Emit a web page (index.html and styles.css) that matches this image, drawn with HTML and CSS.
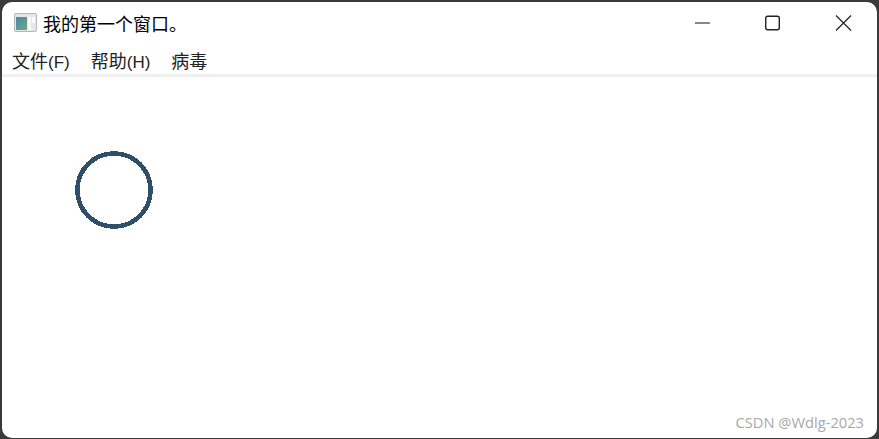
FILE: index.html
```html
<!DOCTYPE html>
<html lang="zh">
<head>
<meta charset="utf-8">
<title>我的第一个窗口。</title>
<link rel="stylesheet" href="styles.css">
</head>
<body>
<div class="window">
  <header class="titlebar">
    <svg class="app-icon" width="24" height="20" viewBox="0 0 24 20">
      <defs><linearGradient id="g" x1="0" y1="0" x2="1" y2="1"><stop offset="0" stop-color="#4a86a8"/><stop offset="1" stop-color="#6fa97f"/></linearGradient></defs>
      <rect x="0.5" y="0.5" width="22" height="18" rx="1.5" fill="#e6e6e6" stroke="#b4b8bc"/>
      <rect x="2" y="4" width="11" height="13" fill="url(#g)"/>
      <rect x="14" y="4" width="3" height="13" fill="#fbfbfb"/>
      <rect x="18" y="4" width="3" height="6" fill="#fbfbfb"/>
    </svg>
    <span class="title">我的第一个窗口。</span>
    <div class="controls">
      <svg class="ctl" width="70" height="16" viewBox="0 0 70 16"><path d="M20 8H35" stroke="#111" stroke-width="1.2"/></svg>
      <svg class="ctl" width="70" height="16" viewBox="0 0 70 16"><rect x="20.7" y="1.2" width="13.6" height="13.6" rx="2" fill="none" stroke="#222" stroke-width="1.4"/></svg>
      <svg class="ctl" width="56" height="16" viewBox="0 0 56 16"><path d="M21 .5L36 15.5M36 .5L21 15.5" stroke="#222" stroke-width="1.2"/></svg>
    </div>
  </header>
  <nav class="menubar">
    <span>文件<span class="mn">(F)</span></span>
    <span>帮助<span class="mn">(H)</span></span>
    <span>病毒</span>
  </nav>
  <main class="client">
    <svg class="circle" width="78" height="78" viewBox="0 0 78 78"><circle cx="39" cy="39" r="36.6" fill="none" stroke="#2f4f68" stroke-width="4.6" shape-rendering="crispEdges"/></svg>
    <div class="watermark">CSDN @Wdlg-2023</div>
  </main>
</div>
</body>
</html>
```
FILE: styles.css
```css
html, body {
  margin: 0;
  padding: 0;
  width: 879px;
  height: 439px;
  overflow: hidden;
  background: #3a3a3a;
}
.window {
  box-sizing: border-box;
  width: 875px;
  height: 436px;
  margin: 2px 0 0 2px;
  background: #fff;
  border-radius: 10px;
  display: flex;
  flex-direction: column;
  overflow: hidden;
  font-family: "Noto Sans CJK SC", "Liberation Sans", sans-serif;
  color: #111;
}
.titlebar {
  height: 42px;
  display: flex;
  align-items: center;
  padding-left: 12px;
  flex: none;
}
.app-icon {
  flex: none;
  margin-right: 5px;
}
.title {
  font-size: 18px;
  line-height: 40px;
  color: #000;
}
.controls {
  margin-left: auto;
  margin-right: 6px;
  display: flex;
}
.menubar {
  height: 33px;
  box-sizing: border-box;
  padding-top: 2px;
  border-bottom: 3px solid #f0f0f0;
  display: flex;
  gap: 21px;
  padding-left: 10px;
  align-items: center;
  font-size: 18px;
  color: #222;
  flex: none;
}
.mn {
  font-family: "Liberation Sans", sans-serif;
  font-size: 17px;
}
.client {
  flex: 1;
  padding: 74px 0 0 73px;
  display: flex;
  flex-direction: column;
}
.circle {
  flex: none;
  filter: blur(0.4px);
}
.watermark {
  align-self: flex-end;
  margin: auto 13px 8px 0;
  font-size: 14.7px;
  line-height: 16px;
  font-family: "Open Sans", sans-serif;
  color: #a8a8a8;
}
```
